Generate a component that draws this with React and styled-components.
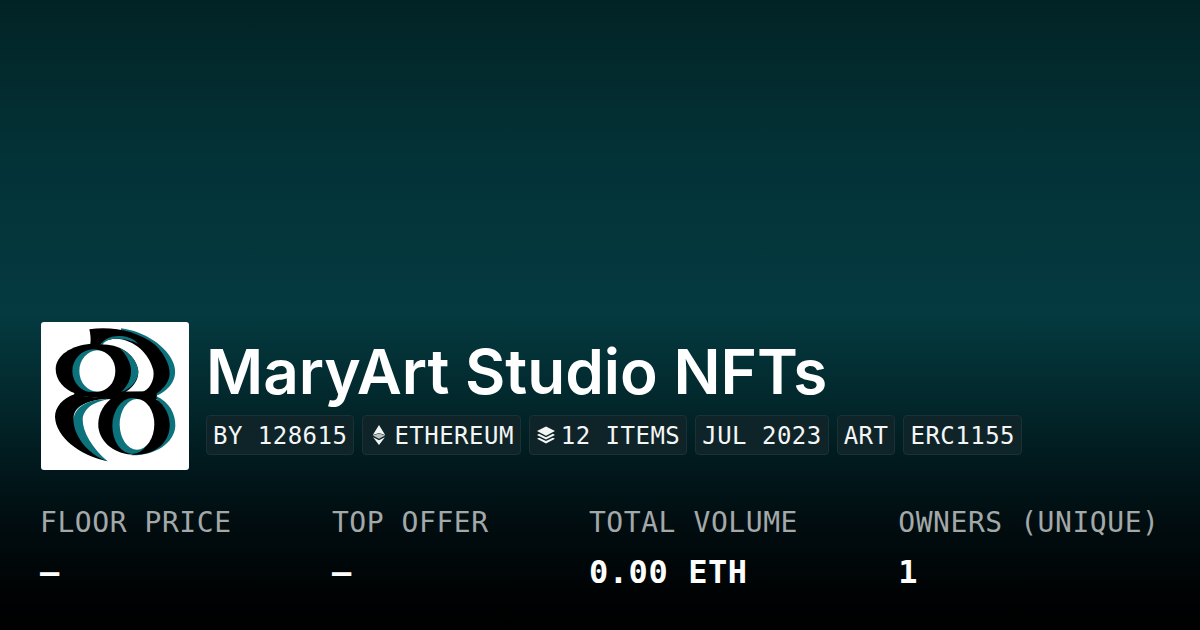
import styled, { createGlobalStyle } from 'styled-components'

const GlobalStyle = createGlobalStyle`
  html, body {
    margin: 0;
    padding: 0;
    background: #000;
  }
`

const Page = styled.div`
  width: 1200px;
  height: 630px;
  box-sizing: border-box;
  overflow: hidden;
  padding: 0 40px 38px 41px;
  display: flex;
  flex-direction: column;
  justify-content: flex-end;
  color: #fff;
  background: linear-gradient(180deg, #022325 0%, #033237 25%, #043a40 50%, #033338 55%, #02262a 65%, #011a1e 73%, #010d10 83%, #000203 95%, #000 100%);
`

const Header = styled.div`
  display: flex;
  align-items: center;
  gap: 17px;
`

const Logo = styled.svg`
  width: 148px;
  height: 148px;
  flex: none;
  border-radius: 3px;
  background: #fff;
`

const Info = styled.div`
  display: flex;
  flex-direction: column;
  gap: 9px;
`

const Title = styled.h1`
  margin: 0;
  font-family: Inter, "Liberation Sans", sans-serif;
  font-size: 62px;
  line-height: 68px;
  font-weight: 600;
  white-space: nowrap;
`

const Chips = styled.div`
  display: flex;
  gap: 8px;
`

const Chip = styled.div`
  display: flex;
  align-items: center;
  height: 40px;
  box-sizing: border-box;
  padding: 2px 6px 0;
  gap: 5px;
  border: 1px solid #1a3136;
  border-radius: 4px;
  background: #0f2428;
  font-family: "DejaVu Sans Mono", monospace;
  font-size: 24px;
  letter-spacing: 0.48px;
  color: #f4f6f6;
  white-space: nowrap;
`

const IconBox = styled.svg`
  width: 20px;
  height: 20px;
  flex: none;
  margin-top: -2px;
  fill: #f4f6f6;
`

const Stats = styled.div`
  display: flex;
  gap: 100.3px;
  margin: 35px 0 0 -1px;
`

const Stat = styled.div`
  display: flex;
  flex-direction: column;
  gap: 11px;
  font-family: "DejaVu Sans Mono", monospace;
`

const Label = styled.div`
  font-size: 28px;
  line-height: 36px;
  letter-spacing: 0.56px;
  color: #a3a8a9;
  white-space: nowrap;
`

const Value = styled.div`
  font-size: 32px;
  line-height: 40px;
  letter-spacing: 0.57px;
  font-weight: 700;
  color: #fff;
  white-space: nowrap;
`

function MaryLogo() {
  const teal = '#0c727c'
  return (
    <Logo viewBox="0 0 444 444">
      {/* swoosh */}
      <path fill={teal} d="M240 19 C310 28 378 72 398 125 C412 165 392 198 350 220 L325 214 C360 190 378 150 370 110 C340 60 290 32 240 27 Z" />
      <path fill="#000" d="M145 22 C215 12 290 28 342 68 C375 98 392 142 384 168 C376 192 358 208 342 218 L300 212 C325 205 342 175 337 145 C325 95 280 52 225 50 C205 50 190 56 176 70 L148 66 C150 50 148 35 145 22 Z" />
      <path fill={teal} d="M176 70 C190 48 215 40 240 42 C262 44 278 50 292 66 C275 56 250 50 225 50 C205 50 190 56 182 72 Z" />
      {/* upper ring */}
      <path fill="#000" d="M150 65 C90 70 45 100 44 140 C44 175 70 202 102 214 L245 214 C275 200 292 175 292 150 C290 110 250 72 200 68 Z" />
      <path fill={teal} d="M235 78 C270 92 292 125 292 150 C290 180 265 203 238 212 C258 195 272 170 270 140 C266 115 252 92 235 78 Z" />
      <ellipse fill={teal} cx="157" cy="147" rx="63" ry="65" />
      <ellipse fill="#fff" cx="169" cy="147" rx="54" ry="62" />
      {/* waist */}
      <path fill="#000" d="M100 210 L345 208 L350 232 L210 232 C170 226 130 226 100 219 Z" />
      {/* lower ring */}
      <path fill={teal} d="M345 222 C385 240 404 275 403 312 C400 365 340 402 270 400 L300 380 C340 360 375 310 345 222 Z" />
      <path fill="#000" d="M210 230 C180 255 170 285 172 315 C178 365 225 398 280 398 C345 398 388 360 386 305 C384 270 365 240 330 222 Z" />
      <ellipse fill={teal} cx="274" cy="312" rx="60" ry="84" />
      <ellipse fill="#fff" cx="288" cy="307" rx="52" ry="76" />
      {/* tail */}
      <path fill="#000" d="M102 216 C65 228 42 255 42 285 C45 345 115 400 200 418 C145 385 100 330 98 285 C100 255 135 232 210 230 C170 226 130 226 102 216 Z" />
      <path fill={teal} d="M210 231 C140 230 100 255 97 295 C100 340 135 395 200 418 C155 380 124 330 125 290 C130 255 165 236 210 231 Z" />
    </Logo>
  )
}

function EthIcon() {
  return (
    <IconBox viewBox="0 0 20 20">
      <path d="M10 0 L16.2 10 L10 8 L3.8 10 Z" />
      <path d="M3.8 10.6 L10 8.6 L16.2 10.6 L10 13.8 Z" opacity="0.75" />
      <path d="M4.1 12.2 L10 15.3 L15.9 12.2 L10 20 Z" />
    </IconBox>
  )
}

function StackIcon() {
  return (
    <IconBox viewBox="0 0 20 20">
      <path d="M10 1.5 L19 6.1 L10 10.7 L1 6.1 Z" />
      <path d="M3.1 8.8 L10 12.3 L16.9 8.8 L19 9.9 L10 14.5 L1 9.9 Z" />
      <path d="M3.1 12.7 L10 16.1 L16.9 12.7 L19 13.8 L10 18.4 L1 13.8 Z" />
    </IconBox>
  )
}

const stats = [
  { label: 'FLOOR PRICE', value: '—' },
  { label: 'TOP OFFER', value: '—' },
  { label: 'TOTAL VOLUME', value: '0.00 ETH' },
  { label: 'OWNERS (UNIQUE)', value: '1' },
]

export default function App() {
  return (
    <Page>
      <GlobalStyle />
      <Header>
        <MaryLogo />
        <Info>
          <Title>MaryArt Studio NFTs</Title>
          <Chips>
            <Chip>BY 128615</Chip>
            <Chip><EthIcon />ETHEREUM</Chip>
            <Chip><StackIcon />12 ITEMS</Chip>
            <Chip>JUL 2023</Chip>
            <Chip>ART</Chip>
            <Chip>ERC1155</Chip>
          </Chips>
        </Info>
      </Header>
      <Stats>
        {stats.map((s) => (
          <Stat key={s.label}>
            <Label>{s.label}</Label>
            <Value>{s.value}</Value>
          </Stat>
        ))}
      </Stats>
    </Page>
  )
}
